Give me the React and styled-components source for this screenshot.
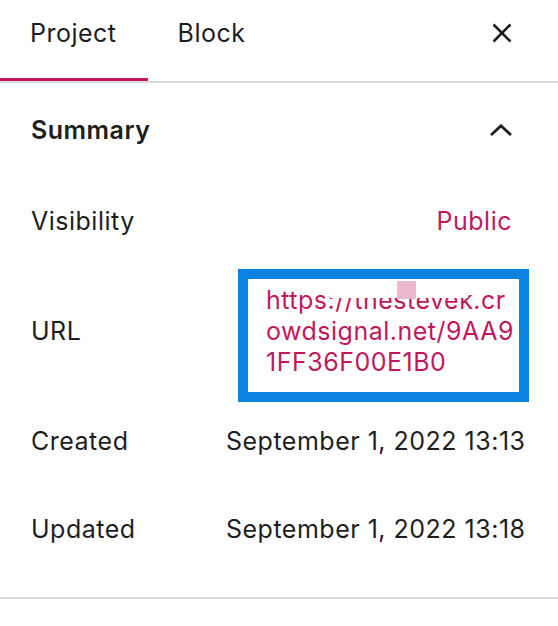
import React from "react";
import styled, { createGlobalStyle } from "styled-components";

const colors = {
  text: "#1e1e1e",
  accent: "#c2185b",
  line: "#dcdcdc",
  focus: "#0a84e0",
};

const GlobalStyle = createGlobalStyle`
  body {
    margin: 0;
    background: #fff;
    font-family: Inter, "Noto Sans", sans-serif;
    font-size: 25px;
    letter-spacing: 0.5px;
    color: ${colors.text};
  }
`;

const TabBar = styled.div`
  display: flex;
  align-items: stretch;
  height: 81px;
  border-bottom: 2px solid ${colors.line};
`;

const Tab = styled.button`
  display: flex;
  align-items: center;
  box-sizing: border-box;
  height: 81px;
  padding: 0 31px 15px 30px;
  margin: 0;
  border: 0;
  background: none;
  font: inherit;
  letter-spacing: inherit;
  color: ${colors.text};
  cursor: pointer;
  box-shadow: ${(p) => (p.active ? `inset 0 -3px 0 ${colors.accent}` : "none")};
`;

const CloseButton = styled.button`
  display: flex;
  align-items: center;
  justify-content: center;
  margin-left: auto;
  margin-right: 36px;
  width: 40px;
  height: 66px;
  padding: 0;
  border: 0;
  background: none;
  color: ${colors.text};
  cursor: pointer;
`;

const Panel = styled.section`
  padding: 0 46px 24px 31px;
  border-bottom: 2px solid ${colors.line};
`;

const Header = styled.div`
  display: flex;
  align-items: center;
  justify-content: space-between;
  height: 94px;
`;

const Title = styled.h2`
  margin: 0;
  font-size: 25px;
  font-weight: 600;
`;

const Row = styled.div`
  display: grid;
  grid-template-columns: 195px 1fr;
  align-items: center;
  min-height: ${(p) => p.tall || 88}px;
`;

const Label = styled.div`
  white-space: nowrap;
`;

const Value = styled.div`
  text-align: right;
  white-space: nowrap;
  color: ${(p) => (p.accent ? colors.accent : colors.text)};
`;

const UrlLink = styled.a`
  position: relative;
  display: inline-block;
  width: 250px;
  margin: 8px -7px 0 0;
  padding: 6px 3px 14px 18px;
  text-align: left;
  white-space: normal;
  word-break: break-all;
  line-height: 31px;
  color: ${colors.accent};
  text-decoration: none;
  outline: 10px solid ${colors.focus};
`;

const Mask = styled.span`
  position: absolute;
  left: 82px;
  top: 0;
  width: 138px;
  height: 19px;
  background: #fff;
`;

const Cursor = styled.span`
  position: absolute;
  left: 149px;
  top: 2px;
  width: 19px;
  height: 18px;
  background: #ecb8cd;
`;

function CloseIcon() {
  return (
    <svg width="20" height="20" viewBox="0 0 20 20" fill="none">
      <path d="M1.5 1.5 L18.5 18.5 M18.5 1.5 L1.5 18.5" stroke="currentColor" strokeWidth="2.6" />
    </svg>
  );
}

function ChevronUp() {
  return (
    <svg width="22" height="12" viewBox="0 0 22 12" fill="none">
      <path d="M1 11 L11 1.8 L21 11" stroke="currentColor" strokeWidth="2.8" />
    </svg>
  );
}

export default function App() {
  return (
    <>
      <GlobalStyle />
      <TabBar>
        <Tab active>Project</Tab>
        <Tab>Block</Tab>
        <CloseButton aria-label="Close">
          <CloseIcon />
        </CloseButton>
      </TabBar>
      <Panel>
        <Header>
          <Title>Summary</Title>
          <ChevronUp />
        </Header>
        <Row>
          <Label>Visibility</Label>
          <Value accent>Public</Value>
        </Row>
        <Row tall={132}>
          <Label>URL</Label>
          <Value>
            <UrlLink href="#">
              https://thestevek.crowdsignal.net/9AA91FF36F00E1B0
              <Mask />
              <Cursor />
            </UrlLink>
          </Value>
        </Row>
        <Row>
          <Label>Created</Label>
          <Value>September 1, 2022 13:13</Value>
        </Row>
        <Row>
          <Label>Updated</Label>
          <Value>September 1, 2022 13:18</Value>
        </Row>
      </Panel>
    </>
  );
}
